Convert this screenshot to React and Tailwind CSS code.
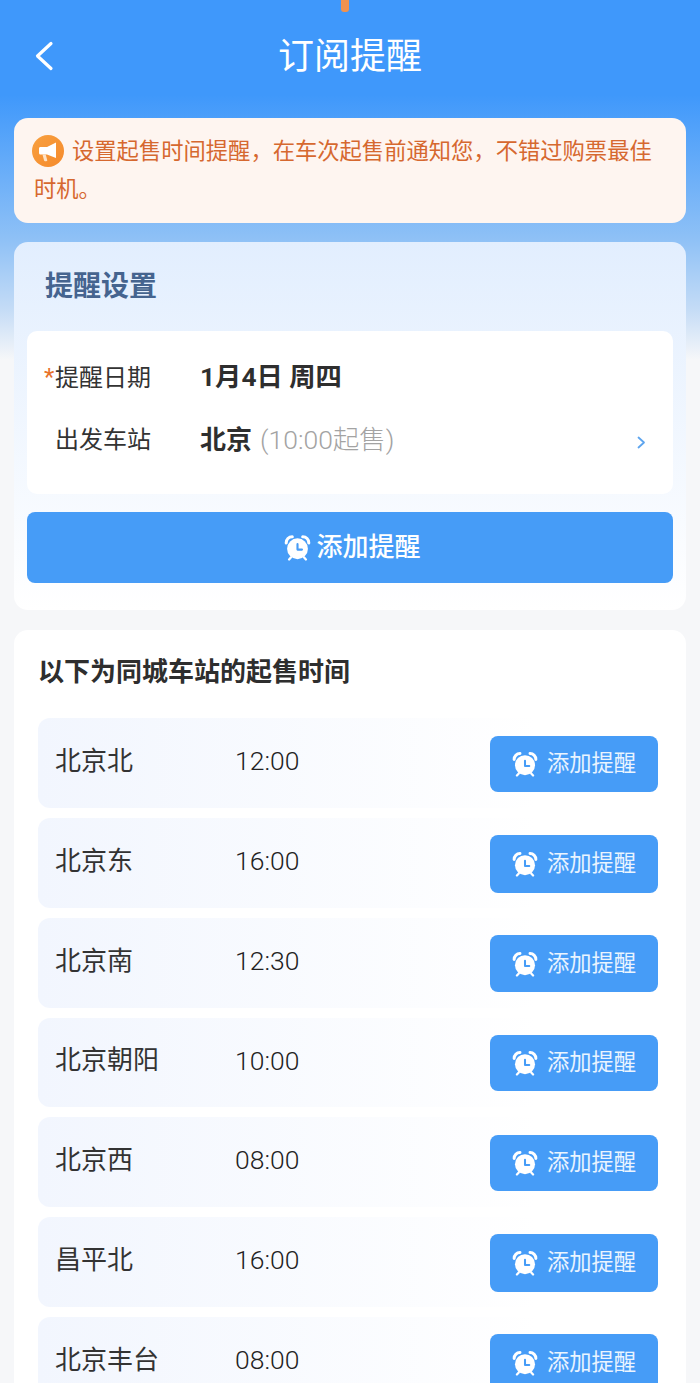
import React from 'react';

const stations = [
    { name: '北京北', time: '12:00', row: 'h-[90px]', btn: 'h-[56px]' },
    { name: '北京东', time: '16:00', row: 'h-[90px]', btn: 'h-[58px]' },
    { name: '北京南', time: '12:30', row: 'h-[90px]', btn: 'h-[57px]' },
    { name: '北京朝阳', time: '10:00', row: 'h-[89px]', btn: 'h-[56px]' },
    { name: '北京西', time: '08:00', row: 'h-[90px]', btn: 'h-[56px]' },
    { name: '昌平北', time: '16:00', row: 'h-[90px]', btn: 'h-[58px]' },
    { name: '北京丰台', time: '08:00', row: 'h-[90px]', btn: 'h-[57px]' },
];

const AlarmIcon = ({ className }) => (
    <svg viewBox="0 0 28 28" className={className}>
        <g fill="none" stroke="#fff" strokeLinecap="round">
            <path d="M2.300 9.200C2.200 5.600 5 2.900 8.600 2.800" strokeWidth="3.200" />
            <path d="M25.700 9.200C25.800 5.600 23 2.900 19.400 2.800" strokeWidth="3.200" />
            <path d="M7.300 24.200L5.300 26.400M20.700 24.200l2 2.200" strokeWidth="2.400" />
        </g>
        <circle cx="14" cy="15.300" r="10.800" fill="#fff" />
        <path d="M14 10.500v5.700h4.600" fill="none" stroke="#469cf7" strokeWidth="2.200" strokeLinecap="round" strokeLinejoin="round" />
    </svg>
);

const MegaphoneIcon = () => (
    <svg viewBox="0 0 32 32" className="inline-block w-[32px] h-[32px] -ml-[2px] mr-[8px] align-[-8px]">
        <defs>
            <linearGradient id="megaBg" x1="0" y1="0" x2="1" y2="1">
                <stop offset="0" stopColor="#f8a03f" />
                <stop offset="1" stopColor="#f58a2c" />
            </linearGradient>
        </defs>
        <circle cx="16" cy="16" r="16" fill="url(#megaBg)" />
        <path d="M24 7.500v15.500L15 19.500H8.500c-1 0-1.500-.6-1.500-1.500v-4.500c0-.9.500-1.500 1.500-1.500H15z" fill="#fff" />
        <path d="M10.500 19.500h3.200l1.500 5.500c.2.800-.3 1.200-1 1.200h-1c-.6 0-1-.3-1.200-.9z" fill="#fde3c8" />
    </svg>
);

const App = () => {
    return (
        <div className="relative h-[1383px] overflow-hidden bg-[#f6f7f9] bg-[linear-gradient(180deg,#3f98fb_95px,#8fc1f6_240px,#c5dcf6_310px,#f6f7f9_360px)] font-['Roboto','Noto_Sans_CJK_SC',sans-serif] px-[14px]">
            {/* status bar notch */}
            <div className="absolute top-0 left-[341px] w-[8px] h-[12px] bg-[#f0924f] rounded-b-[3px]"></div>

            <header className="relative h-[118px] flex items-start justify-center pt-[34px]">
                <svg viewBox="0 0 20 30" className="absolute left-[20px] top-[41px] w-[20px] h-[30px]" fill="none" stroke="#fff" strokeWidth="3.200" strokeLinecap="round" strokeLinejoin="round">
                    <path d="M17 2.500L3.500 15 17 27.500" />
                </svg>
                <h1 className="text-[36px] leading-[46px] text-white font-normal">订阅提醒</h1>
            </header>

            <div className="h-[105px] bg-[#fef5f0] rounded-[14px] pl-[20px] pr-[18px] pt-[14px] text-[22.300px] leading-[38px] text-[#d6682f]">
                <MegaphoneIcon />设置起售时间提醒，在车次起售前通知您，不错过购票最佳时机。
            </div>

            <section className="mt-[19px] h-[368px] rounded-[14px] bg-gradient-to-b from-[#e2eefe] to-[#ffffff] px-[13px]">
                <h2 className="pt-[26px] pl-[18px] text-[28px] leading-[38px] font-bold text-[#45648f]">提醒设置</h2>
                <div className="mt-[25px] h-[163px] bg-white rounded-[10px] pt-[27px]">
                    <div className="flex items-center h-[40px]">
                        <span className="relative w-[173px] pl-[28px] text-[24px] text-[#333]">
                            <span className="absolute left-[17px] top-[-1px] text-[#e8712a]">*</span>提醒日期
                        </span>
                        <span className="text-[26.300px] font-bold text-[#2e2e2e]">1月4日 周四</span>
                    </div>
                    <div className="flex items-center h-[40px] mt-[22px] pr-[27px]">
                        <span className="w-[173px] pl-[28px] text-[24px] text-[#333]">出发车站</span>
                        <span className="text-[26px] font-bold text-[#2e2e2e]">北京</span>
                        <span className="ml-[8px] text-[26.500px] text-[#a3a3a3] font-light">(10:00起售)</span>
                        <svg viewBox="0 0 9 13" className="ml-auto w-[9px] h-[13px] mt-[4px]" fill="none" stroke="#5ea5ee" strokeWidth="1.800" strokeLinecap="round" strokeLinejoin="round">
                            <path d="M1.500 1.500l5.500 5-5.500 5" />
                        </svg>
                    </div>
                </div>
                <button className="mt-[18px] w-full h-[71px] bg-[#469cf7] rounded-[8px] flex items-center justify-center pl-[5px] text-white text-[26px] font-medium">
                    <AlarmIcon className="w-[27px] h-[27px] mr-[5px]" />添加提醒
                </button>
            </section>

            <section className="mt-[20px] bg-white rounded-t-[14px] px-[24px] pt-[25px] h-[760px]">
                <h2 className="text-[26px] leading-[34px] font-bold text-[#2e2e2e]">以下为同城车站的起售时间</h2>
                <div className="mt-[29px] flex flex-col gap-[10px]">
                    {stations.map(s => (
                        <div key={s.name} className={`${s.row} shrink-0 flex items-center rounded-[12px] bg-gradient-to-r from-[#f2f6fe] to-[#ffffff] to-80% pl-[17px] pr-[4px]`}>
                            <span className="w-[180px] text-[26px] text-[#333] -mt-[4px]">{s.name}</span>
                            <span className="text-[26.500px] font-light text-[#222] -mt-[4px]">{s.time}</span>
                            <button className={`${s.btn} ml-auto mt-[1px] w-[168px] bg-[#469cf7] rounded-[8px] flex items-center justify-center text-[#eaf4ff] text-[22.300px]`}>
                                <AlarmIcon className="w-[26px] h-[26px] mr-[9px]" />添加提醒
                            </button>
                        </div>
                    ))}
                </div>
            </section>
        </div>
    );
};

export default App;
